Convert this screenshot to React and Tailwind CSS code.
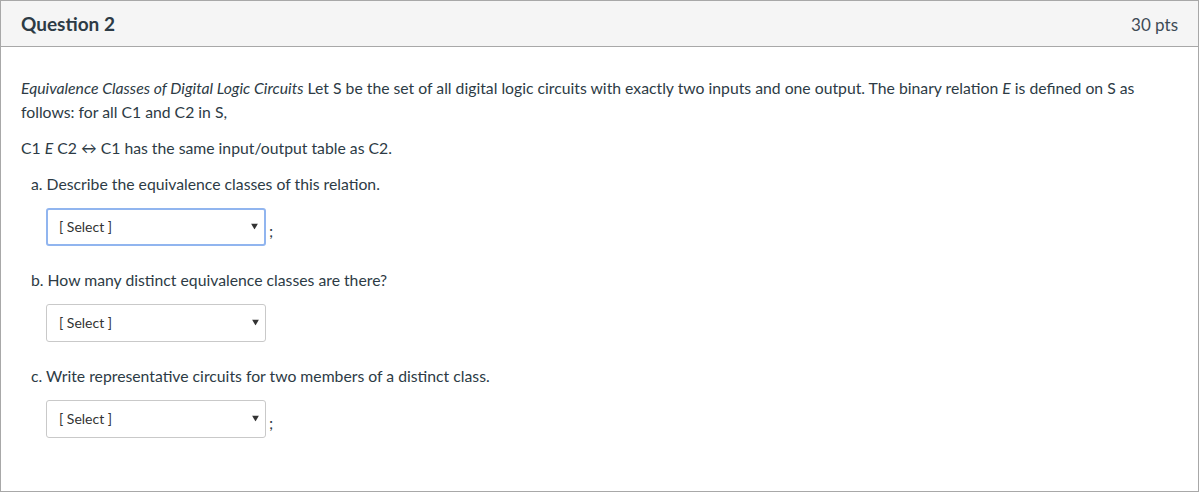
import React from 'react';

const font = { fontFamily: 'Lato, "Open Sans", sans-serif' };

function SelectBox({ focused, semicolon }) {
  return (
    <div className="flex items-end">
      <div
        className={
          'relative flex items-center w-[220px] h-[38px] rounded-[3px] bg-white text-[14px] text-[#333] ' +
          (focused ? 'border-2 border-[#91b5ef] pl-[11px]' : 'border border-[#c9c9c9] pl-[12px]')
        }
      >
        <span>[ Select ]</span>
        <svg
          className="absolute right-[6px] top-1/2 -translate-y-[60%]"
          width="7"
          height="6"
          viewBox="0 0 7 6"
        >
          <path d="M0 0 L7 0 L3.5 6 Z" fill="#333" />
        </svg>
      </div>
      {semicolon && <span className="ml-[3px] mb-[7px] text-[16px] leading-none text-[#2d3b45]">;</span>}
    </div>
  );
}

export default function App() {
  return (
    <div className="w-[1201px] h-[493px] bg-white" style={font}>
      <div className="w-[1199px] h-[492px] border border-[#a8a8a8] flex flex-col text-[#2d3b45]">
        <div className="h-[46px] bg-[#f5f5f5] border-b border-[#a8a8a8] flex items-center justify-between px-[20px] pt-[2px]">
          <span className="text-[19px] font-bold">Question 2</span>
          <span className="text-[17px] text-[#3d4a55]">30 pts</span>
        </div>
        <div className="px-[20px] pt-[29px] text-[15.75px] leading-[24px]">
          <p>
            <em>Equivalence Classes of Digital Logic Circuits</em> Let S be the set of all digital logic circuits with exactly two inputs and one output. The binary relation <em>E</em> is defined on S as follows: for all C1 and C2 in S,
          </p>
          <p className="mt-[12px]">
            C1 <em>E</em> C2 ↔ C1 has the same input/output table as C2.
          </p>
          <div className="pl-[10px] mt-[12px]">
            <p>a. Describe the equivalence classes of this relation.</p>
            <div className="pl-[15px] mt-[12px]">
              <SelectBox focused semicolon />
            </div>
            <p className="mt-[22px]">b. How many distinct equivalence classes are there?</p>
            <div className="pl-[15px] mt-[12px]">
              <SelectBox />
            </div>
            <p className="mt-[22px]">c. Write representative circuits for two members of a distinct class.</p>
            <div className="pl-[15px] mt-[12px]">
              <SelectBox semicolon />
            </div>
          </div>
        </div>
      </div>
    </div>
  );
}
